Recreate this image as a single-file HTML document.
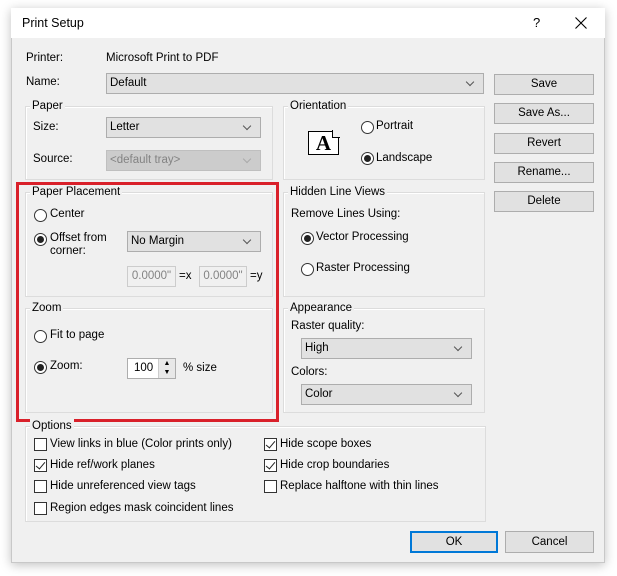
<!DOCTYPE html>
<html><head><style>
*{box-sizing:border-box;margin:0;padding:0}
body{width:617px;height:576px;background:#fff;position:relative;overflow:hidden;font-family:"Liberation Sans",sans-serif;font-size:11.5px;color:#000}
.a{position:absolute;white-space:nowrap}
.win{position:absolute;left:11px;top:8px;width:594px;height:555px;background:#f0f0f0;border:1px solid #c8c8c8;box-shadow:0 2px 10px rgba(0,0,0,.25)}
.title{position:absolute;left:11px;top:8px;width:594px;height:30px;background:#fff}
.grp{position:absolute;border:1px solid #dcdcdc;box-shadow:inset 1px 1px 0 #fff}
.gl{position:absolute;background:#f0f0f0;padding:0 2px;line-height:14px;white-space:nowrap}
.cb{position:absolute;background:#e1e1e1;border:1px solid #adadad;height:21px;padding-left:3px;line-height:19px}
.cb.dis{background:#ccc;border-color:#bfbfbf;color:#838383}
.cb:after{content:"";position:absolute;right:10px;top:5px;width:5px;height:5px;border-right:1px solid #555;border-bottom:1px solid #555;transform:rotate(45deg)}
.cb.dis:after{border-color:#aaa}
.btn{position:absolute;background:#e1e1e1;border:1px solid #adadad;text-align:center;line-height:19px;height:21px}
.rd{position:absolute;width:13px;height:13px;border:1px solid #333;border-radius:50%;background:#fff}
.rd.on:after{content:"";position:absolute;left:2px;top:2px;width:7px;height:7px;border-radius:50%;background:#222}
.ck{position:absolute;width:13px;height:13px;border:1px solid #333;background:#fff}
.ck.on:after{content:"";position:absolute;left:3px;top:0px;width:4px;height:8px;border-right:1px solid #222;border-bottom:1px solid #222;transform:rotate(40deg)}
.tb{position:absolute;border:1px solid #ccc;background:#f0f0f0;color:#838383;height:21px;line-height:19px;text-align:center}
</style></head><body>
<div class="win"></div>
<div class="title"></div>
<div class="a" style="left:22px;top:16px;font-size:12.5px">Print Setup</div>
<div class="a" style="left:533px;top:15px;font-size:13px">?</div>
<svg class="a" style="left:575px;top:17px" width="12" height="12" viewBox="0 0 12 12"><path d="M0.5 0.5L11.5 11.5M11.5 0.5L0.5 11.5" stroke="#000" stroke-width="1.1"/></svg>

<div class="a" style="left:26px;top:52px">Printer:</div>
<div class="a" style="left:106px;top:52px">Microsoft Print to PDF</div>
<div class="a" style="left:26px;top:76px">Name:</div>
<div class="cb" style="left:106px;top:73px;width:378px">Default</div>

<div class="btn" style="left:494px;top:74px;width:100px">Save</div>
<div class="btn" style="left:494px;top:103px;width:100px">Save As...</div>
<div class="btn" style="left:494px;top:133px;width:100px">Revert</div>
<div class="btn" style="left:494px;top:162px;width:100px">Rename...</div>
<div class="btn" style="left:494px;top:191px;width:100px">Delete</div>

<div class="grp" style="left:25px;top:106px;width:248px;height:74px"></div>
<div class="gl" style="left:30px;top:99px">Paper</div>
<div class="a" style="left:33px;top:121px">Size:</div>
<div class="cb" style="left:106px;top:117px;width:155px">Letter</div>
<div class="a" style="left:33px;top:153px">Source:</div>
<div class="cb dis" style="left:106px;top:150px;width:155px">&lt;default tray&gt;</div>

<div class="grp" style="left:283px;top:106px;width:202px;height:74px"></div>
<div class="gl" style="left:288px;top:99px">Orientation</div>
<div class="a" style="left:308px;top:131px;width:31px;height:24px;border:1px solid #000;background:#fff;font-family:'Liberation Serif',serif;font-size:21px;font-weight:bold;text-align:center;line-height:23px">A</div>
<div class="a" style="left:332px;top:130px;width:8px;height:8px;background:#f0f0f0;border-left:1px solid #000;border-bottom:1px solid #000"></div>
<div class="rd" style="left:361px;top:121px"></div>
<div class="a" style="left:376px;top:120px">Portrait</div>
<div class="rd on" style="left:361px;top:152px"></div>
<div class="a" style="left:376px;top:152px">Landscape</div>

<div class="grp" style="left:25px;top:192px;width:248px;height:105px"></div>
<div class="gl" style="left:30px;top:185px">Paper Placement</div>
<div class="rd" style="left:34px;top:209px"></div>
<div class="a" style="left:50px;top:208px">Center</div>
<div class="rd on" style="left:34px;top:233px"></div>
<div class="a" style="left:50px;top:232px">Offset from</div>
<div class="a" style="left:50px;top:245px">corner:</div>
<div class="cb" style="left:127px;top:231px;width:134px">No Margin</div>
<div class="tb" style="left:127px;top:266px;width:49px">0.0000"</div>
<div class="a" style="left:179px;top:270px">=x</div>
<div class="tb" style="left:199px;top:266px;width:48px">0.0000"</div>
<div class="a" style="left:250px;top:270px">=y</div>

<div class="grp" style="left:25px;top:308px;width:248px;height:105px"></div>
<div class="gl" style="left:30px;top:301px">Zoom</div>
<div class="rd" style="left:34px;top:330px"></div>
<div class="a" style="left:50px;top:329px">Fit to page</div>
<div class="rd on" style="left:34px;top:361px"></div>
<div class="a" style="left:50px;top:360px">Zoom:</div>
<div class="a" style="left:127px;top:358px;width:49px;height:21px;border:1px solid #adadad;background:#fff;padding-left:6px;line-height:19px">100</div>
<div class="a" style="left:158px;top:359px;width:17px;height:19px;border-left:1px solid #ccc;background:#e8e8e8;font-size:7px;line-height:9px;text-align:center">▲<br>▼</div>
<div class="a" style="left:183px;top:362px">% size</div>

<div class="a" style="left:16px;top:182px;width:263px;height:240px;border:3px solid #d9202a"></div>

<div class="grp" style="left:283px;top:192px;width:202px;height:105px"></div>
<div class="gl" style="left:288px;top:185px">Hidden Line Views</div>
<div class="a" style="left:291px;top:208px">Remove Lines Using:</div>
<div class="rd on" style="left:301px;top:232px"></div>
<div class="a" style="left:316px;top:231px">Vector Processing</div>
<div class="rd" style="left:301px;top:263px"></div>
<div class="a" style="left:316px;top:262px">Raster Processing</div>

<div class="grp" style="left:283px;top:308px;width:202px;height:105px"></div>
<div class="gl" style="left:288px;top:301px">Appearance</div>
<div class="a" style="left:291px;top:320px">Raster quality:</div>
<div class="cb" style="left:301px;top:338px;width:171px">High</div>
<div class="a" style="left:291px;top:366px">Colors:</div>
<div class="cb" style="left:301px;top:384px;width:171px">Color</div>

<div class="grp" style="left:25px;top:426px;width:461px;height:96px"></div>
<div class="gl" style="left:30px;top:419px">Options</div>
<div class="ck" style="left:34px;top:438px"></div><div class="a" style="left:50px;top:438px">View links in blue (Color prints only)</div>
<div class="ck on" style="left:34px;top:459px"></div><div class="a" style="left:50px;top:459px">Hide ref/work planes</div>
<div class="ck" style="left:34px;top:480px"></div><div class="a" style="left:50px;top:480px">Hide unreferenced view tags</div>
<div class="ck" style="left:34px;top:502px"></div><div class="a" style="left:50px;top:502px">Region edges mask coincident lines</div>
<div class="ck on" style="left:264px;top:438px"></div><div class="a" style="left:280px;top:438px">Hide scope boxes</div>
<div class="ck on" style="left:264px;top:459px"></div><div class="a" style="left:280px;top:459px">Hide crop boundaries</div>
<div class="ck" style="left:264px;top:480px"></div><div class="a" style="left:280px;top:480px">Replace halftone with thin lines</div>

<div class="btn" style="left:410px;top:531px;width:88px;height:22px;border:2px solid #0078d7;line-height:18px">OK</div>
<div class="btn" style="left:505px;top:531px;width:89px;height:22px;line-height:20px">Cancel</div>
</body></html>
